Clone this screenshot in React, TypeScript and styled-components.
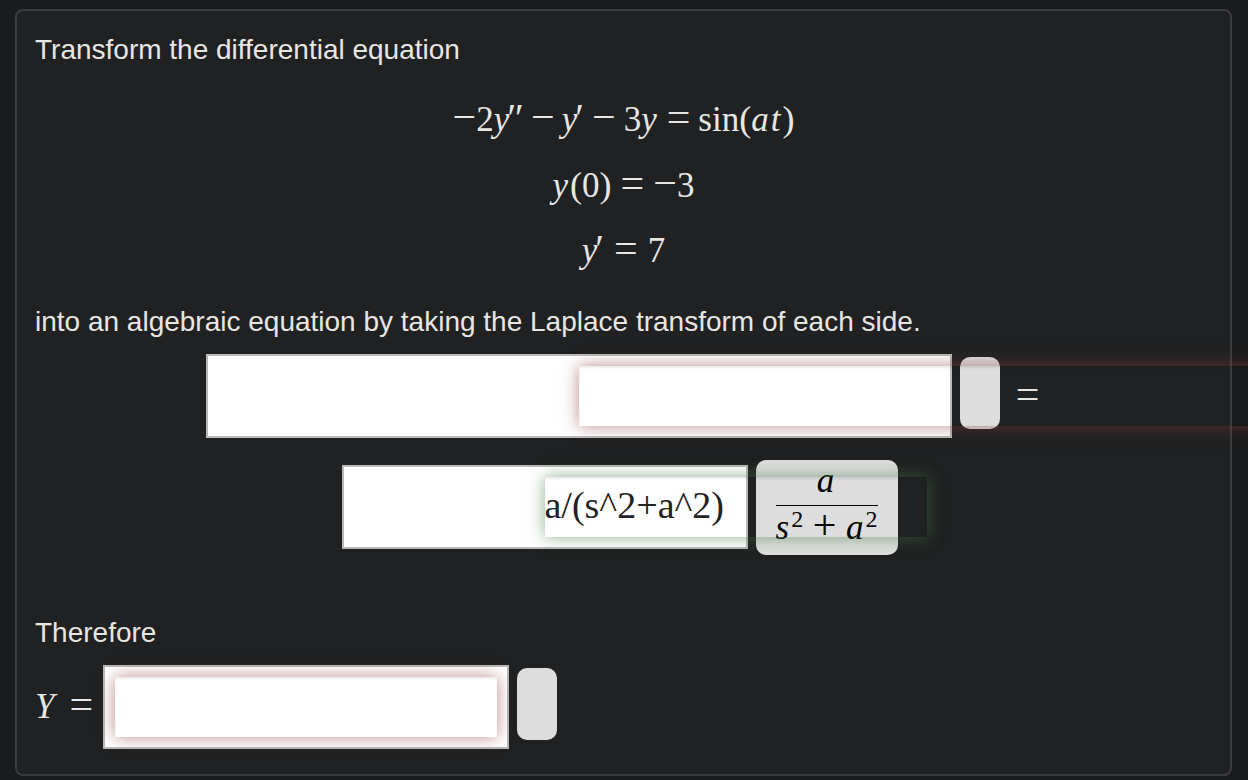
import React from "react";
import styled, { createGlobalStyle } from "styled-components";

const GlobalStyle = createGlobalStyle`
  * { box-sizing: border-box; }
  html { background: #1a1b1c; }
  body {
    margin: 0;
    overflow: hidden;
    background: #1a1b1c;
    color: #e8e6e3;
    font-family: "Liberation Sans", Arial, sans-serif;
    font-size: 28px;
    line-height: 40px;
  }
`;

const Card = styled.main`
  margin: 9px 16px 4px 15px;
  padding: 18px;
  border: 2px solid #3b3c3e;
  border-radius: 8px;
  background: #202122;
`;

const Prose = styled.p`
  margin: 0;
  padding-top: 1px;
`;

const Equations = styled.div`
  display: flex;
  flex-direction: column;
  align-items: center;
  gap: 26px;
  margin: 29px 0 30px;
`;

const Maths = styled.div`
  display: flex;
  align-items: baseline;
  font-family: "Liberation Serif", "Times New Roman", serif;
  font-size: 35px;
  line-height: 40px;
  height: 40px;
  white-space: nowrap;
`;

const Var = styled.var`
  font-style: italic;
  padding-right: 2px;
`;

const Paren = styled.span`
  font-size: 36px;
`;

const Prime = styled.sup`
  font-size: 40px;
  line-height: 20px;
  vertical-align: baseline;
  margin-left: -4px;
`;

const Op = styled.span<{ $before?: number; $after?: number }>`
  font-size: 42px;
  line-height: 20px;
  margin-left: ${(p) => p.$before ?? 0}px;
  margin-right: ${(p) => p.$after ?? p.$before ?? 0}px;
`;

const AnswerRow = styled.div<{ $centered?: boolean; $height: number }>`
  display: flex;
  align-items: center;
  justify-content: ${(p) => (p.$centered ? "center" : "flex-start")};
  gap: 8px;
  height: ${(p) => p.$height}px;
`;

const Field = styled.label<{ $width: number }>`
  position: relative;
  flex: none;
  width: ${(p) => p.$width}px;
  height: 84px;
  border: 2px solid #b9b9b9;
  background: #fff;
`;

const glows = {
  wrong: "rgba(140, 62, 62, 0.6)",
  right: "rgba(66, 120, 66, 0.6)",
};

const Entry = styled.input<{ $state: "wrong" | "right"; $shifted?: boolean }>`
  position: absolute;
  z-index: 1;
  top: 10px;
  left: ${(p) => (p.$shifted ? "50%" : "10px")};
  width: calc(100% - 20px);
  height: 60px;
  padding: 0 0 4px;
  border: 0;
  outline: 0;
  background: transparent;
  color: #222;
  font-family: "Liberation Serif", "Times New Roman", serif;
  font-size: 38px;
  box-shadow: inset 0 2px 2px rgba(0, 0, 0, 0.075), 0 0 16px ${(p) => glows[p.$state]};
`;

const Preview = styled.button`
  flex: none;
  min-width: 40px;
  min-height: 72px;
  padding: 0 20px;
  border: 0;
  border-radius: 10px;
  background: #ddd;
  color: #000;
  font-family: "Liberation Serif", "Times New Roman", serif;
  font-size: 35px;
`;

const PreviewSlot = styled.div`
  display: flex;
  padding-bottom: 6px;
`;

const Fraction = styled.span`
  display: flex;
  flex-direction: column;
  align-items: center;
  width: 102px;
  height: 95px;
`;

const Numerator = styled.span`
  width: 100%;
  height: 46px;
  line-height: 42px;
  border-bottom: 1px solid #000;
`;

const Denominator = styled.span`
  display: flex;
  justify-content: space-between;
  align-items: baseline;
  width: 100%;
  line-height: 44px;
`;

const Sup = styled.sup`
  font-size: 24px;
  line-height: 0;
  vertical-align: 12px;
`;

const Equals = styled.div`
  font-family: "Liberation Serif", "Times New Roman", serif;
  font-size: 42px;
  padding: 0 2px 4px 8px;
`;

const Spacer = styled.div<{ $size: number }>`
  height: ${(p) => p.$size}px;
`;

export default function App() {
  return (
    <>
      <GlobalStyle />
      <Card>
        <Prose>Transform the differential equation</Prose>
        <Equations>
          <Maths>
            <Op>−</Op>2<Var>y</Var><Prime>″</Prime>
            <Op $before={7}>−</Op>
            <Var>y</Var><Prime>′</Prime>
            <Op $before={8}>−</Op>
            3<Var>y</Var>
            <Op $before={8}>=</Op>
            sin<Paren>(</Paren><Var>a</Var><Var>t</Var><Paren>)</Paren>
          </Maths>
          <Maths>
            <Var>y</Var><Paren>(</Paren>0<Paren>)</Paren>
            <Op $before={9}>=</Op>
            <Op>−</Op>3
          </Maths>
          <Maths>
            <Var>y</Var><Prime>′</Prime>
            <Op $before={10}>=</Op>
            7
          </Maths>
        </Equations>
        <Prose>into an algebraic equation by taking the Laplace transform of each side.</Prose>
        <Spacer $size={12} />
        <AnswerRow $centered $height={84}>
          <Field $width={746}>
            <Entry $state="wrong" $shifted aria-label="Left side of the equation" />
          </Field>
          <PreviewSlot>
            <Preview type="button" aria-label="Preview of the left side" />
          </PreviewSlot>
          <Equals>=</Equals>
        </AnswerRow>
        <Spacer $size={21} />
        <AnswerRow $centered $height={96}>
          <Field $width={406}>
            <Entry $state="right" $shifted defaultValue="a/(s^2+a^2)" aria-label="Right side of the equation" />
          </Field>
          <Preview type="button">
            <Fraction>
              <Numerator><Var>a</Var></Numerator>
              <Denominator>
                <span><Var>s</Var><Sup>2</Sup></span>
                <Op>+</Op>
                <span><Var>a</Var><Sup>2</Sup></span>
              </Denominator>
            </Fraction>
          </Preview>
          <span />
        </AnswerRow>
        <Spacer $size={57} />
        <Prose>Therefore</Prose>
        <Spacer $size={12} />
        <AnswerRow $height={84}>
          <Maths><Var>Y</Var><Op $before={13} $after={2}>=</Op></Maths>
          <Field $width={406}>
            <Entry $state="wrong" aria-label="Y" />
          </Field>
          <PreviewSlot>
            <Preview type="button" aria-label="Preview of Y" />
          </PreviewSlot>
        </AnswerRow>
        <Spacer $size={7} />
      </Card>
    </>
  );
}
